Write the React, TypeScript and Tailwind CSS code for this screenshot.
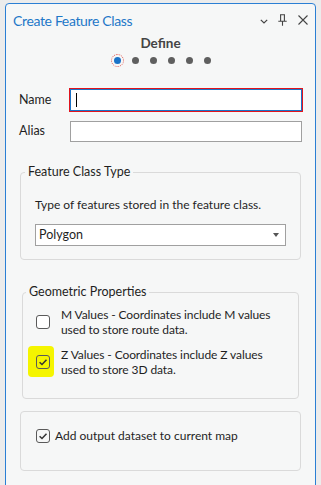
const font = { fontFamily: 'Lato, "Noto Sans", sans-serif' };

export default function App() {
  return (
    <main className="h-[485px] w-[321px] overflow-hidden bg-[#ececec] pt-[3px] px-[5px]" style={font}>
      <div className="flex h-[490px] flex-col rounded-t-[4px] border-[1.5px] border-[#2b7fd4] bg-[#f6f7f7] text-[12px] text-[#1f1f1f]">
        <header className="flex h-[30px] items-center pl-[7px] pr-[7px] pt-[2px]">
          <h1 className="flex-1 text-[14px] tracking-[-0.35px] text-[#1e78c8]">Create Feature Class</h1>
          <Chevron />
          <PinIcon />
          <CloseIcon />
        </header>

        <p className="text-center text-[13.5px] font-bold leading-[18px] text-[#444]">Define</p>
        <StepDots />

        <div className="mt-[21px] flex items-center pl-[13px] pr-[12px]">
          <label className="w-[50px] text-[12.5px]">Name</label>
          <div className="flex h-[24px] flex-1 items-center border border-[#e0141e]">
            <div className="flex h-full w-full items-center border border-[#1a73c8] bg-white pl-[5px]">
              <span className="h-[14px] w-px bg-black" />
            </div>
          </div>
        </div>
        <div className="mt-[9px] flex items-center pl-[13px] pr-[13px]">
          <label className="w-[51px] text-[12.5px]">Alias</label>
          <div className="h-[21px] flex-1 border border-[#a0a0a0] bg-white" />
        </div>

        <fieldset className="mx-[14px] mt-[22px] rounded-[4px] border border-[#dadada] px-[14px] pb-[13px]">
          <legend className="ml-[-10px] px-[3px] text-[12.5px] leading-[16px]">Feature Class Type</legend>
          <p className="mt-[17px] leading-[16px]">Type of features stored in the feature class.</p>
          <div className="mt-[11px] flex h-[22px] items-center justify-between border border-[#a0a0a0] bg-white pl-[3px] pr-[6px]">
            <span className="text-[12.5px]">Polygon</span>
            <span className="h-0 w-0 border-x-[3px] border-t-[4px] border-x-transparent border-t-[#555]" />
          </div>
        </fieldset>

        <fieldset className="mx-[16px] mt-[24px] rounded-[4px] border border-[#dadada] pl-[13px] pr-[8px] pb-[21px]">
          <legend className="ml-[-10px] px-[3px] text-[12.5px] leading-[16px]">Geometric Properties</legend>
          <div className="mt-[7px] flex items-center">
            <span className="h-[14px] w-[14px] rounded-[3px] border border-[#5a5a5a] bg-white" />
            <p className="ml-[11px] leading-[15px] tracking-[-0.1px]">
              M Values - Coordinates include M values
              <br />
              used to store route data.
            </p>
          </div>
          <div className="mt-[9px] flex items-center">
            <div className="ml-[-8px] flex h-[31px] w-[26px] items-center rounded-[4px] bg-[#f5f500] pl-[8px]">
              <CheckBox />
            </div>
            <p className="ml-[7px] leading-[15px] tracking-[-0.1px]">
              Z Values - Coordinates include Z values
              <br />
              used to store 3D data.
            </p>
          </div>
        </fieldset>

        <div className="mx-[14px] mt-[12px] flex h-[60px] items-start rounded-[4px] border border-[#dadada] pl-[15px] pt-[17px]">
          <CheckBox />
          <span className="ml-[5px] leading-[14px]">Add output dataset to current map</span>
        </div>
      </div>
    </main>
  );
}

function Chevron() {
  return (
    <svg width="8" height="5" viewBox="0 0 8 5" className="mr-[10px] mt-[3px]">
      <path d="M0.8 0.8 L4 4 L7.2 0.8" fill="none" stroke="#444" strokeWidth="1.2" />
    </svg>
  );
}

function PinIcon() {
  return (
    <svg width="9" height="12" viewBox="0 0 9 12" fill="none" stroke="#444" strokeWidth="1.1" className="mr-[11px]">
      <path d="M2 0.8 H7 M2.6 0.8 V7 M6.4 0.8 V7 M0.3 7.3 H8.7 M4.5 7.3 V11.8" />
    </svg>
  );
}

function CloseIcon() {
  return (
    <svg width="10" height="10" viewBox="0 0 10 10" fill="none" stroke="#444" strokeWidth="1.1">
      <path d="M0.5 0.5 L9.5 9.5 M9.5 0.5 L0.5 9.5" />
    </svg>
  );
}

function StepDots() {
  return (
    <div className="mt-[2px] flex items-center justify-center">
      <span className="flex h-[13px] w-[13px] items-center justify-center rounded-full border border-dotted border-[#e0504a]">
        <span className="h-[7px] w-[7px] rounded-full bg-[#1a73c8]" />
      </span>
      {[0, 1, 2, 3, 4].map((i) => (
        <span key={i} className={`${i === 0 ? "ml-[8px]" : "ml-[11px]"} h-[7px] w-[7px] rounded-full bg-[#5f5f5f]`} />
      ))}
    </div>
  );
}

function CheckBox() {
  return (
    <span className="flex h-[14px] w-[14px] items-center justify-center rounded-[3px] border border-[#5a5a5a]">
      <svg width="10" height="10" viewBox="0 0 10 10">
        <path d="M1.6 5.2 L4 7.5 L8.5 2.7" fill="none" stroke="#333" strokeWidth="1.5" />
      </svg>
    </span>
  );
}
